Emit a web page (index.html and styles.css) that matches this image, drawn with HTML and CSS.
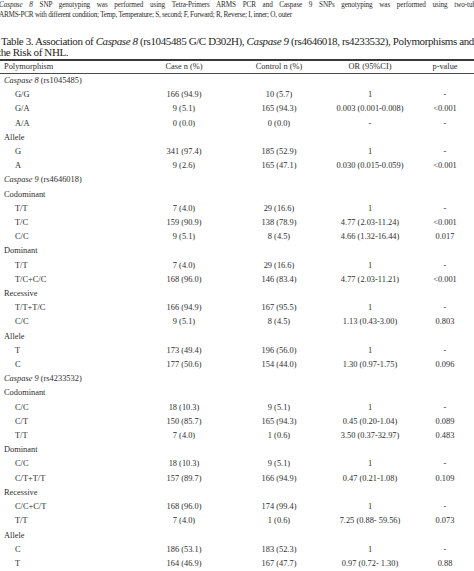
FILE: index.html
```html
<!DOCTYPE html>
<html lang="en">
<head>
<meta charset="utf-8">
<title>Table 3</title>
<link rel="stylesheet" href="styles.css">
</head>
<body>
<div class="page">
  <div class="caption">
    <div class="cap-line cap-first"><i>Caspase 8</i> SNP genotyping was performed using Tetra-Primers ARMS PCR and Caspase 9 SNPs genotyping was performed using two-tube</div>
    <div class="cap-line">ARMS-PCR with different condition; Temp, Temperature; S, second; F, Forward; R, Reverse; I, inner; O, outer</div>
  </div>
  <div class="title">
    <div class="title-line">Table 3. Association of <i>Caspase 8</i> (rs1045485 G/C D302H), <i>Caspase 9</i> (rs4646018, rs4233532), Polymorphisms and</div>
    <div class="title-line title-second">the Risk of NHL.</div>
  </div>
  <table class="data">
    <colgroup>
      <col class="c-label"><col class="c-case"><col class="c-ctrl"><col class="c-or"><col class="c-p">
    </colgroup>
    <thead>
      <tr><th class="lbl">Polymorphism</th><th>Case n (%)</th><th>Control n (%)</th><th>OR (95%CI)</th><th>p-value</th></tr>
    </thead>
    <tbody>
      <tr><td class="lbl" colspan="5"><i>Caspase 8</i> (rs1045485)</td></tr>
      <tr><td class="sub">G/G</td><td>166 (94.9)</td><td>10 (5.7)</td><td>1</td><td>-</td></tr>
      <tr><td class="sub">G/A</td><td>9 (5.1)</td><td>165 (94.3)</td><td>0.003 (0.001-0.008)</td><td>&lt;0.001</td></tr>
      <tr><td class="sub">A/A</td><td>0 (0.0)</td><td>0 (0.0)</td><td>-</td><td>-</td></tr>
      <tr><td class="lbl" colspan="5">Allele</td></tr>
      <tr><td class="sub">G</td><td>341 (97.4)</td><td>185 (52.9)</td><td>1</td><td>-</td></tr>
      <tr><td class="sub">A</td><td>9 (2.6)</td><td>165 (47.1)</td><td>0.030 (0.015-0.059)</td><td>&lt;0.001</td></tr>
      <tr><td class="lbl" colspan="5"><i>Caspase 9</i> (rs4646018)</td></tr>
      <tr><td class="lbl" colspan="5">Codominant</td></tr>
      <tr><td class="sub">T/T</td><td>7 (4.0)</td><td>29 (16.6)</td><td>1</td><td>-</td></tr>
      <tr><td class="sub">T/C</td><td>159 (90.9)</td><td>138 (78.9)</td><td>4.77 (2.03-11.24)</td><td>&lt;0.001</td></tr>
      <tr><td class="sub">C/C</td><td>9 (5.1)</td><td>8 (4.5)</td><td>4.66 (1.32-16.44)</td><td>0.017</td></tr>
      <tr><td class="lbl" colspan="5">Dominant</td></tr>
      <tr><td class="sub">T/T</td><td>7 (4.0)</td><td>29 (16.6)</td><td>1</td><td>-</td></tr>
      <tr><td class="sub">T/C+C/C</td><td>168 (96.0)</td><td>146 (83.4)</td><td>4.77 (2.03-11.21)</td><td>&lt;0.001</td></tr>
      <tr><td class="lbl" colspan="5">Recessive</td></tr>
      <tr><td class="sub">T/T+T/C</td><td>166 (94.9)</td><td>167 (95.5)</td><td>1</td><td>-</td></tr>
      <tr><td class="sub">C/C</td><td>9 (5.1)</td><td>8 (4.5)</td><td>1.13 (0.43-3.00)</td><td>0.803</td></tr>
      <tr><td class="lbl" colspan="5">Allele</td></tr>
      <tr><td class="sub">T</td><td>173 (49.4)</td><td>196 (56.0)</td><td>1</td><td>-</td></tr>
      <tr><td class="sub">C</td><td>177 (50.6)</td><td>154 (44.0)</td><td>1.30 (0.97-1.75)</td><td>0.096</td></tr>
      <tr><td class="lbl" colspan="5"><i>Caspase 9</i> (rs4233532)</td></tr>
      <tr><td class="lbl" colspan="5">Codominant</td></tr>
      <tr><td class="sub">C/C</td><td>18 (10.3)</td><td>9 (5.1)</td><td>1</td><td>-</td></tr>
      <tr><td class="sub">C/T</td><td>150 (85.7)</td><td>165 (94.3)</td><td>0.45 (0.20-1.04)</td><td>0.089</td></tr>
      <tr><td class="sub">T/T</td><td>7 (4.0)</td><td>1 (0.6)</td><td>3.50 (0.37-32.97)</td><td>0.483</td></tr>
      <tr><td class="lbl" colspan="5">Dominant</td></tr>
      <tr><td class="sub">C/C</td><td>18 (10.3)</td><td>9 (5.1)</td><td>1</td><td>-</td></tr>
      <tr><td class="sub">C/T+T/T</td><td>157 (89.7)</td><td>166 (94.9)</td><td>0.47 (0.21-1.08)</td><td>0.109</td></tr>
      <tr><td class="lbl" colspan="5">Recessive</td></tr>
      <tr><td class="sub">C/C+C/T</td><td>168 (96.0)</td><td>174 (99.4)</td><td>1</td><td>-</td></tr>
      <tr><td class="sub">T/T</td><td>7 (4.0)</td><td>1 (0.6)</td><td>7.25 (0.88- 59.56)</td><td>0.073</td></tr>
      <tr><td class="lbl" colspan="5">Allele</td></tr>
      <tr><td class="sub">C</td><td>186 (53.1)</td><td>183 (52.3)</td><td>1</td><td>-</td></tr>
      <tr><td class="sub">T</td><td>164 (46.9)</td><td>167 (47.7)</td><td>0.97 (0.72- 1.30)</td><td>0.88</td></tr>
    </tbody>
  </table>
</div>
</body>
</html>
```

FILE: styles.css
```css
html, body {
  margin: 0;
  padding: 0;
  background: #ffffff;
}

body {
  width: 474px;
  height: 571px;
  overflow: hidden;
  font-family: "Liberation Serif", "Times New Roman", serif;
  color: #2b2b2b;
}

.page {
  width: 474px;
}

.caption {
  font-size: 7.2px;
  line-height: 10px;
  height: 20px;
  margin-left: -1px;
  letter-spacing: -0.25px;
}

.cap-line {
  white-space: nowrap;
}

.cap-first {
  width: 480px;
  white-space: normal;
  height: 10px;
  overflow: visible;
  text-align: justify;
  text-align-last: justify;
  letter-spacing: -0.1px;
}

.title {
  margin-top: 16px;
  font-size: 11px;
  line-height: 11px;
  letter-spacing: -0.39px;
  color: #262626;
}

.title-line {
  white-space: nowrap;
  margin-left: 1px;
}

.title-second {
  margin-left: -2px;
}

.data {
  margin-top: 1px;
  width: 480px;
  table-layout: fixed;
  border-collapse: collapse;
  font-size: 8.4px;
  color: #2e2e2e;
}

.c-label { width: 140px; }
.c-case { width: 88px; }
.c-ctrl { width: 102px; }
.c-or { width: 80px; }
.c-p { width: 70px; }

.data thead tr {
  border-top: 2px solid #3a3a3a;
  border-bottom: 1.5px solid #4a4a4a;
}

.data th {
  font-weight: normal;
  height: 12px;
  line-height: 12px;
  padding: 0;
  text-align: center;
  white-space: nowrap;
}

.data td {
  height: 14.2px;
  line-height: 14.2px;
  padding: 0;
  text-align: center;
  white-space: nowrap;
}

.data th.lbl,
.data td.lbl {
  text-align: left;
  padding-left: 4px;
}

.data td.sub {
  text-align: left;
  padding-left: 15px;
}
```
